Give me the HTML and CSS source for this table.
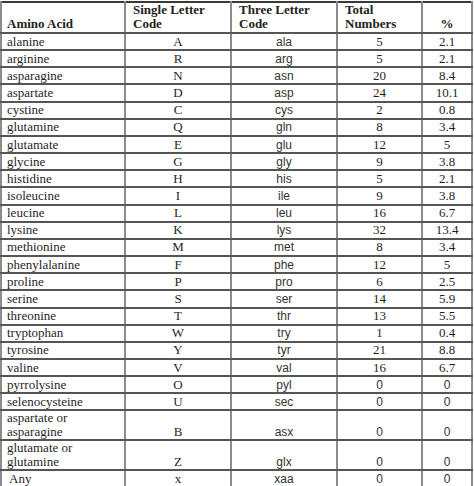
FILE: index.html
```html
<!DOCTYPE html>
<html>
<head>
<meta charset="utf-8">
<link rel="stylesheet" href="styles.css">
</head>
<body>
<table class="aa">
<colgroup>
<col class="c1"><col class="c2"><col class="c3"><col class="c4"><col class="c5">
</colgroup>
<thead>
<tr class="head">
<th class="name">Amino Acid</th>
<th>Single Letter<br>Code</th>
<th>Three Letter<br>Code</th>
<th>Total<br>Numbers</th>
<th class="pct">%</th>
</tr>
</thead>
<tbody>
<tr><td class="name">alanine</td><td class="one">A</td><td class="three">ala</td><td class="num">5</td><td class="num">2.1</td></tr>
<tr><td class="name">arginine</td><td class="one">R</td><td class="three">arg</td><td class="num">5</td><td class="num">2.1</td></tr>
<tr><td class="name">asparagine</td><td class="one">N</td><td class="three">asn</td><td class="num">20</td><td class="num">8.4</td></tr>
<tr><td class="name">aspartate</td><td class="one">D</td><td class="three">asp</td><td class="num">24</td><td class="num">10.1</td></tr>
<tr><td class="name">cystine</td><td class="one">C</td><td class="three">cys</td><td class="num">2</td><td class="num">0.8</td></tr>
<tr><td class="name">glutamine</td><td class="one">Q</td><td class="three">gln</td><td class="num">8</td><td class="num">3.4</td></tr>
<tr><td class="name">glutamate</td><td class="one">E</td><td class="three">glu</td><td class="num">12</td><td class="num">5</td></tr>
<tr><td class="name">glycine</td><td class="one">G</td><td class="three">gly</td><td class="num">9</td><td class="num">3.8</td></tr>
<tr><td class="name">histidine</td><td class="one">H</td><td class="three">his</td><td class="num">5</td><td class="num">2.1</td></tr>
<tr><td class="name">isoleucine</td><td class="one">I</td><td class="three">ile</td><td class="num">9</td><td class="num">3.8</td></tr>
<tr><td class="name">leucine</td><td class="one">L</td><td class="three">leu</td><td class="num">16</td><td class="num">6.7</td></tr>
<tr><td class="name">lysine</td><td class="one">K</td><td class="three">lys</td><td class="num">32</td><td class="num">13.4</td></tr>
<tr><td class="name">methionine</td><td class="one">M</td><td class="three">met</td><td class="num">8</td><td class="num">3.4</td></tr>
<tr><td class="name">phenylalanine</td><td class="one">F</td><td class="three">phe</td><td class="num">12</td><td class="num">5</td></tr>
<tr><td class="name">proline</td><td class="one">P</td><td class="three">pro</td><td class="num">6</td><td class="num">2.5</td></tr>
<tr><td class="name">serine</td><td class="one">S</td><td class="three">ser</td><td class="num">14</td><td class="num">5.9</td></tr>
<tr><td class="name">threonine</td><td class="one">T</td><td class="three">thr</td><td class="num">13</td><td class="num">5.5</td></tr>
<tr><td class="name">tryptophan</td><td class="one">W</td><td class="three">try</td><td class="num">1</td><td class="num">0.4</td></tr>
<tr><td class="name">tyrosine</td><td class="one">Y</td><td class="three">tyr</td><td class="num">21</td><td class="num">8.8</td></tr>
<tr><td class="name">valine</td><td class="one">V</td><td class="three">val</td><td class="num">16</td><td class="num">6.7</td></tr>
<tr><td class="name">pyrrolysine</td><td class="one">O</td><td class="three">pyl</td><td class="num sans">0</td><td class="num sans">0</td></tr>
<tr><td class="name">selenocysteine</td><td class="one">U</td><td class="three">sec</td><td class="num sans">0</td><td class="num sans">0</td></tr>
<tr class="double"><td class="name">aspartate or<br>asparagine</td><td class="one">B</td><td class="three">asx</td><td class="num sans">0</td><td class="num sans">0</td></tr>
<tr class="double"><td class="name">glutamate or<br>glutamine</td><td class="one">Z</td><td class="three">glx</td><td class="num sans">0</td><td class="num sans">0</td></tr>
<tr><td class="name any">Any</td><td class="one">x</td><td class="three">xaa</td><td class="num sans">0</td><td class="num sans">0</td></tr>
</tbody>
</table>
</body>
</html>
```
FILE: styles.css
```css
html, body {
  margin: 0;
  padding: 0;
  background: #ffffff;
}

body {
  padding-top: 1px;
}

.aa {
  border-collapse: collapse;
  table-layout: fixed;
  width: 472px;
  font-family: "Liberation Serif", "Times New Roman", serif;
  font-size: 13px;
  color: #1f1f1f;
  border-top: 2px solid #3a3a3a;
  border-left: 2px solid #9a9a9a;
  border-right: 2px solid #6a6a6a;
}

.c1 { width: 124px; }
.c2 { width: 106px; }
.c3 { width: 106px; }
.c4 { width: 85px; }
.c5 { width: 50px; }

.aa th,
.aa td {
  padding: 0 5px;
  line-height: 14px;
  vertical-align: middle;
  border-left: 2px solid #8c8c8c;
  border-right: 2px solid #8c8c8c;
  border-bottom: 2px solid #555555;
  white-space: nowrap;
  overflow: hidden;
}

.aa tr.head {
  height: 31px;
}

.head th {
  font-weight: bold;
  text-align: left;
  vertical-align: bottom;
  padding: 0 4px 1px 7px;
  color: #222;
}

.head th.name {
  padding-left: 5px;
}

.head th.pct {
  text-align: center;
  padding-left: 4px;
}

.aa tbody tr {
  height: 17.17px;
}

.aa tbody tr.double {
  height: 30px;
}

.aa tr.double td {
  vertical-align: bottom;
}

.aa tr.double td.name {
  vertical-align: top;
}

.aa td.name {
  text-align: left;
}

.aa td.any {
  padding-left: 7px;
}

.aa td.one {
  text-align: center;
}

.aa td.three {
  text-align: center;
  font-family: "Liberation Sans", Arial, sans-serif;
  font-size: 12px;
  color: #333;
}

.aa td.num {
  text-align: center;
}

.aa td.sans {
  font-family: "Liberation Sans", Arial, sans-serif;
  font-size: 12px;
  color: #333;
}
```
